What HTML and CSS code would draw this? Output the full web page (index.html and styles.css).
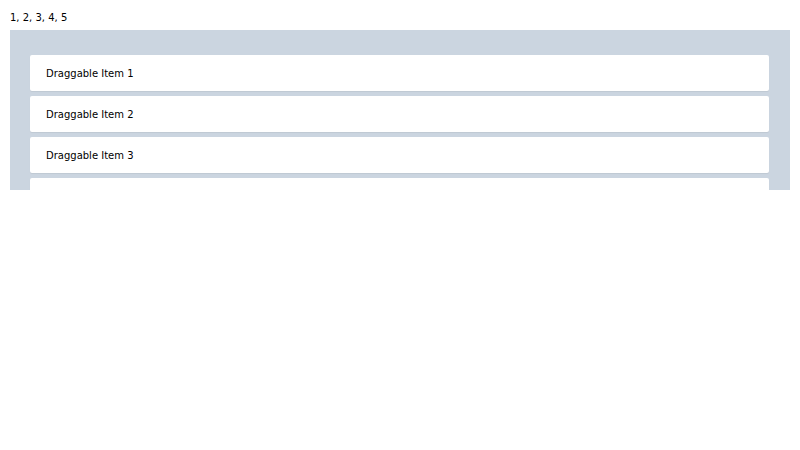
FILE: index.html
```html
<!DOCTYPE html>
<html>
<head>
<meta charset="utf-8">
<link rel="stylesheet" href="styles.css">
</head>
<body>
<div class="order">1, 2, 3, 4, 5</div>
<div class="board">
  <div class="list">
    <div class="item">Draggable Item 1</div>
    <div class="item">Draggable Item 2</div>
    <div class="item">Draggable Item 3</div>
    <div class="item">Draggable Item 4</div>
    <div class="item">Draggable Item 5</div>
  </div>
</div>
</body>
</html>
```
FILE: styles.css
```css
html, body {
  margin: 0;
  padding: 0;
  background: #ffffff;
}
body {
  padding: 10px;
  font-family: "DejaVu Sans", sans-serif;
  font-size: 10px;
  color: #000;
}
.order {
  line-height: 16px;
  margin-bottom: 4px;
}
.board {
  background: #cbd5e0;
  height: 160px;
  overflow: hidden;
  padding: 25px 21px 0 20px;
  box-sizing: border-box;
}
.list {
  display: flex;
  flex-direction: column;
  gap: 5px;
}
.item {
  background: #fff;
  height: 36px;
  display: flex;
  align-items: center;
  padding-left: 16px;
  border-radius: 2px;
  box-shadow: 0 1px 1px rgba(0,0,0,0.06);
}
```
